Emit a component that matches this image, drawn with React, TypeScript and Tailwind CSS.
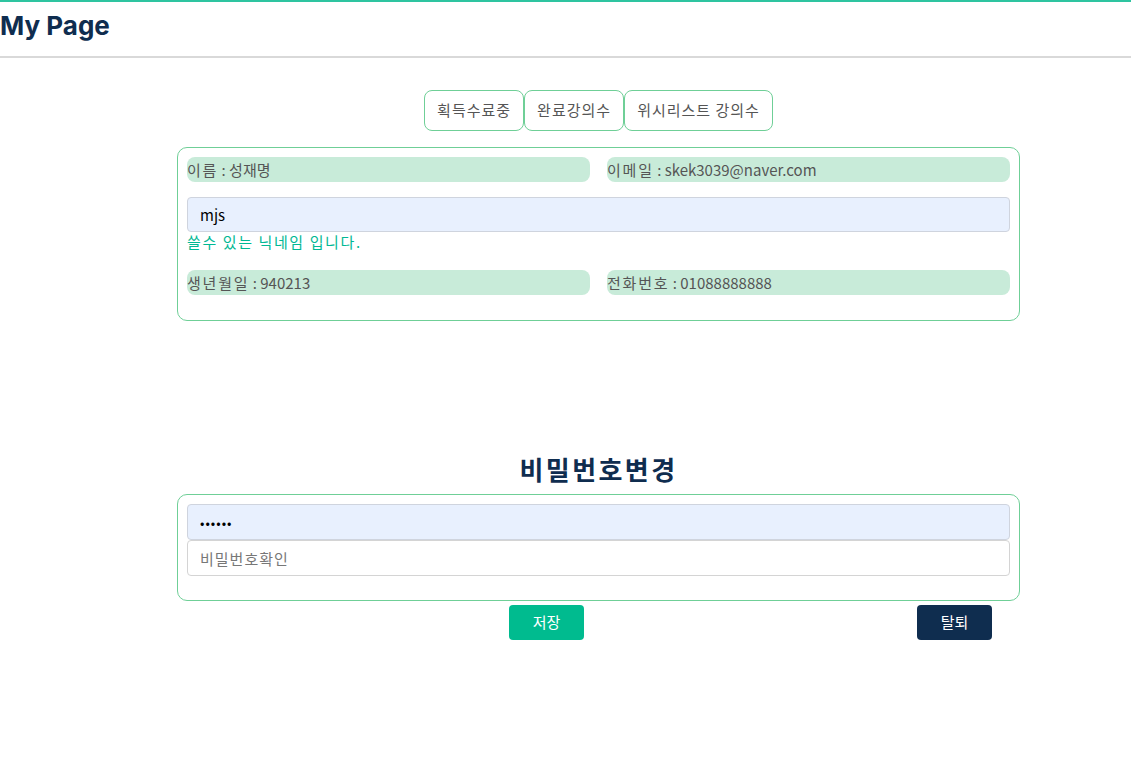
import React, { useState } from "react";

const TABS = ["획득수료중", "완료강의수", "위시리스트 강의수"];

const font = "font-['Noto_Sans_CJK_KR','Noto_Sans',sans-serif]";

// Hangul runs render a bit narrower than in the original, so widen them a little
function K({ children }: { children: React.ReactNode }) {
  return <span className="tracking-[1.8px]">{children}</span>;
}

function InfoPill({ label, value }: { label: string; value: string }) {
  return (
    <div className="h-[25px] flex-1 rounded-[8px] bg-[#c8ebd9] text-[15px] leading-[25px] text-[#555]">
      <K>{label}</K> : {value}
    </div>
  );
}

export default function App() {
  const [nickname, setNickname] = useState("mjs");
  const [password, setPassword] = useState("123456");
  const [confirm, setConfirm] = useState("");

  return (
    <div className={`min-h-[775px] bg-white ${font}`}>
      {/* Header */}
      <header className="h-[58px] border-t-2 border-b-2 border-t-[#2ec4a0] border-b-[#d9d9d9]">
        <h1 className="font-['Inter',sans-serif] text-[26px] font-bold leading-[48px] text-[#0f2d4f]">
          My Page
        </h1>
      </header>

      <main className="ml-[177px] w-[843px]">
        {/* Tabs */}
        <div className="mt-[32px] flex justify-center">
          {TABS.map((tab) => (
            <button
              key={tab}
              className="h-[41px] rounded-[8px] border border-[#6fcf97] px-[12px] text-[15px] tracking-[1px] text-[#555] bg-white"
            >
              {tab}
            </button>
          ))}
        </div>

        {/* Profile card */}
        <section className="mt-[16px] rounded-[10px] border border-[#6fcf97] px-[9px] pt-[9px] pb-[25px]">
          <div className="flex gap-[17px]">
            <InfoPill label="이름" value="성재명" />
            <InfoPill label="이메일" value="skek3039@naver.com" />
          </div>
          <input
            value={nickname}
            onChange={(e) => setNickname(e.target.value)}
            className="mt-[15px] block h-[35px] w-full rounded-[4px] border border-[#cfd4de] bg-[#e8f0fe] px-[12px] text-[15px] text-black outline-none"
          />
          <p className="text-[15px] leading-[20px] tracking-[1.6px] text-[#00b894]">쓸수 있는 닉네임 입니다.</p>
          <div className="mt-[18px] flex gap-[17px]">
            <InfoPill label="생년월일" value="940213" />
            <InfoPill label="전화번호" value="01088888888" />
          </div>
        </section>

        {/* Password */}
        <h2 className="mt-[131px] text-center text-[26px] font-bold leading-[34px] tracking-[2.4px] text-[#0f2d4f]">
          비밀번호변경
        </h2>
        <section className="mt-[8px] rounded-[10px] border border-[#6fcf97] px-[9px] pt-[9px] pb-[24px]">
          <input
            type="password"
            value={password}
            onChange={(e) => setPassword(e.target.value)}
            className="block h-[36px] w-full rounded-[4px] border border-[#cfd4de] bg-[#e8f0fe] px-[12px] text-[13px] tracking-[1px] text-black outline-none"
          />
          <input
            type="password"
            value={confirm}
            placeholder="비밀번호확인"
            onChange={(e) => setConfirm(e.target.value)}
            className="block h-[36px] w-full rounded-[4px] border border-[#d4d4d4] bg-white px-[12px] text-[15px] tracking-[1px] text-black outline-none placeholder:text-[#777]"
          />
        </section>

        <div className="mt-[4px] flex pl-[332px] gap-[333px]">
          <button className="h-[35px] w-[75px] rounded-[4px] bg-[#00bb8f] text-[15px] text-white">저장</button>
          <button className="h-[35px] w-[75px] rounded-[4px] bg-[#0f2d4f] text-[15px] text-white">탈퇴</button>
        </div>
      </main>
    </div>
  );
}
